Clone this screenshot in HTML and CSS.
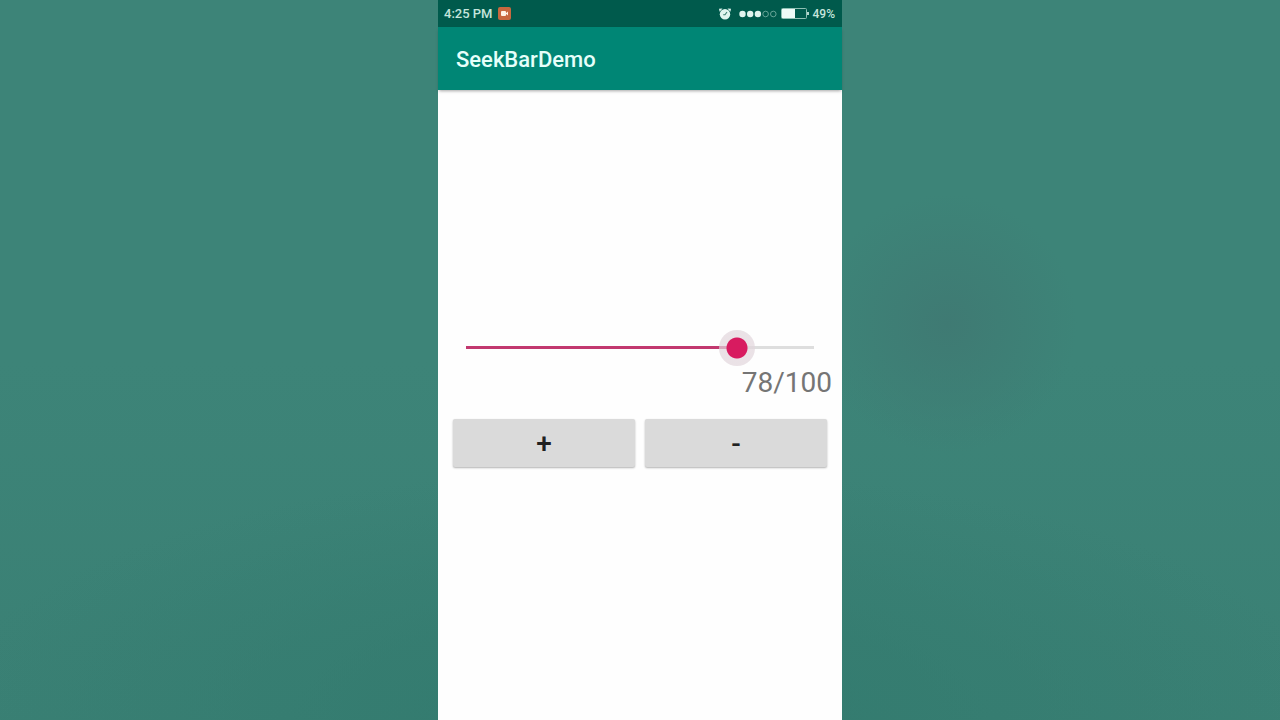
FILE: index.html
```html
<!DOCTYPE html>
<html lang="en">
<head>
    <meta charset="UTF-8">
    <meta name="viewport" content="width=device-width, initial-scale=1.0">
    <title>SeekBarDemo</title>
    <link rel="stylesheet" href="styles.css">
</head>
<body>
    <div class="phone">
        <div class="status-bar">
            <span class="clock">4:25 PM</span>
            <svg class="record-icon" width="13" height="13" viewBox="0 0 13 13" aria-hidden="true">
                <rect width="13" height="13" rx="2" fill="#c8683f"/>
                <rect x="3" y="4" width="5" height="5" rx="1" fill="#fff3e6"/>
                <path d="M7.5 6.5l2.5-2v4z" fill="#fff3e6"/>
            </svg>
            <div class="status-right">
                <svg class="alarm-icon" width="12" height="12" viewBox="0 0 12 12" aria-hidden="true">
                    <path d="M0 .8L3.5.6.6 3.7zM12 .8L8.5.6l2.9 3.1z" fill="#e0f5ef"/>
                    <circle cx="6" cy="6.3" r="5.2" fill="#e0f5ef"/>
                    <path d="M8 4L6 6.8H4.2" fill="none" stroke="#3d8072" stroke-width="1.1"/>
                </svg>
                <svg class="signal-icon" width="38" height="8" viewBox="0 0 38 8" aria-hidden="true">
                    <circle cx="3.5" cy="4" r="3.2" fill="#e0f5ef"/>
                    <circle cx="11.2" cy="4" r="3.2" fill="#e0f5ef"/>
                    <circle cx="18.9" cy="4" r="3.2" fill="#e0f5ef"/>
                    <circle cx="26.6" cy="4" r="2.8" fill="none" stroke="#7fb5a8" stroke-width=".8"/>
                    <circle cx="34.3" cy="4" r="2.8" fill="none" stroke="#7fb5a8" stroke-width=".8"/>
                </svg>
                <svg class="battery-icon" width="28" height="11" viewBox="0 0 28 11" aria-hidden="true">
                    <rect x=".5" y=".5" width="25" height="10" rx="1" fill="none" stroke="#8fc0b4"/>
                    <rect x="1" y="1" width="13" height="9" fill="#effaf7"/>
                    <rect x="26" y="4" width="2" height="3" fill="#b5d8cf"/>
                </svg>
                <span>49%</span>
            </div>
        </div>
        <header class="app-bar">
            <h1>SeekBarDemo</h1>
        </header>
        <main class="content">
            <input type="range" id="seekBar" class="seek-bar" min="0" max="100" value="78" aria-label="Progress">
            <output id="progress" class="progress" for="seekBar">78/100</output>
            <div class="buttons">
                <button type="button" id="plus">+</button>
                <button type="button" id="minus">-</button>
            </div>
        </main>
    </div>
    <script>
        const seekBar = document.getElementById('seekBar');
        const progress = document.getElementById('progress');

        function updateProgress() {
            progress.textContent = seekBar.value + '/' + seekBar.max;
            seekBar.style.setProperty('--fill', seekBar.value + '%');
        }

        seekBar.addEventListener('input', updateProgress);

        document.getElementById('plus').addEventListener('click', function() {
            seekBar.stepUp();
            updateProgress();
        });

        document.getElementById('minus').addEventListener('click', function() {
            seekBar.stepDown();
            updateProgress();
        });

        updateProgress();
    </script>
</body>
</html>
```
FILE: styles.css
```css
* {
    box-sizing: border-box;
}
body {
    margin: 0;
    font-family: Roboto, sans-serif;
    background:
        radial-gradient(ellipse 130px 130px at 74% 45%, #3f7a73, transparent),
        radial-gradient(ellipse 55% 35% at 50% 100%, #327a6e, transparent),
        linear-gradient(#3d8478 50%, #3a8074);
}
.phone {
    display: flex;
    flex-direction: column;
    width: 100%;
    max-width: 404px;
    min-height: 100vh;
    margin: 0 auto;
    background-color: #fefefe;
}
.status-bar {
    display: flex;
    align-items: center;
    gap: 5px;
    height: 27px;
    padding: 0 7px 0 6px;
    background-color: #005a4c;
    color: #c5e5dc;
    font-size: 12px;
    font-weight: 500;
}
.clock {
    font-size: 13px;
}
.status-right {
    display: flex;
    align-items: center;
    gap: 4px;
    margin-left: auto;
}
.alarm-icon {
    margin-right: 4px;
}
.app-bar {
    display: flex;
    align-items: center;
    height: 63px;
    padding: 2px 18px 0;
    background-color: #008675;
    box-shadow: 0 2px 3px -1px rgba(0, 0, 0, 0.35);
}
.app-bar h1 {
    margin: 0;
    color: #e6fffa;
    font-size: 22px;
    font-weight: 500;
}
.content {
    flex: 1;
    display: flex;
    flex-direction: column;
    justify-content: center;
    padding: 0 10px;
}
.seek-bar {
    -webkit-appearance: none;
    appearance: none;
    width: 100%;
    height: 35px;
    margin: 0;
    /* the line stops half a thumb short of both ends */
    background: linear-gradient(to right, #c2386f var(--fill), #dedede var(--fill)) center / calc(100% - 36px) 3px no-repeat;
    cursor: pointer;
}
.seek-bar::-webkit-slider-thumb {
    -webkit-appearance: none;
    width: 36px;
    height: 36px;
    border-radius: 50%;
    background: radial-gradient(circle, #d81b60 10px, rgba(226, 214, 220, 0.7) 11px);
}
.progress {
    color: #757575;
    font-size: 28px;
    line-height: 36px;
    text-align: right;
}
.buttons {
    display: flex;
    gap: 10px;
    margin: 18px 5px 13px;
}
.buttons button {
    flex: 1;
    height: 48px;
    padding: 0;
    border: none;
    border-radius: 2px;
    background-color: #dadada;
    box-shadow: 0 1px 2px rgba(0, 0, 0, 0.3);
    color: #212121;
    font-family: inherit;
    font-size: 28px;
    font-weight: 500;
    cursor: pointer;
}
.buttons button:active {
    background-color: #c4c4c4;
}
```
